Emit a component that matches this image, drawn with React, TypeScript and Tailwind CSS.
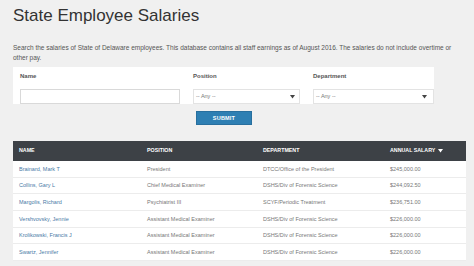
import React from "react";

const rows = [
  ["Brainard, Mark T", "President", "DTCC/Office of the President", "$245,000.00"],
  ["Collins, Gary L", "Chief Medical Examiner", "DSHS/Div of Forensic Science", "$244,092.50"],
  ["Margolis, Richard", "Psychiatrist III", "SCYF/Periodic Treatment", "$236,751.00"],
  ["Vershvovsky, Jennie", "Assistant Medical Examiner", "DSHS/Div of Forensic Science", "$226,000.00"],
  ["Krolikowski, Francis J", "Assistant Medical Examiner", "DSHS/Div of Forensic Science", "$226,000.00"],
  ["Swartz, Jennifer", "Assistant Medical Examiner", "DSHS/Div of Forensic Science", "$226,000.00"],
];

function Caret() {
  return (
    <svg width="5" height="4" viewBox="0 0 10 8" className="inline-block">
      <path d="M0 0 L10 0 L5 7 Z" fill="currentColor" />
    </svg>
  );
}

export default function App() {
  return (
    <div
      className="w-[474px] h-[266px] overflow-hidden bg-[#f0f0f0] text-[#333]"
      style={{ fontFamily: '"Liberation Sans", Arial, sans-serif' }}
    >
      <div className="pl-[13px] pr-[8px]">
        <h1 className="pt-[6px] text-[17px] leading-[20px] text-[#333]">State Employee Salaries</h1>
        <p className="mt-[17px] text-[6.5px] leading-[10px] text-[#555] w-[448px]">
          Search the salaries of State of Delaware employees. This database contains all staff earnings as of August 2016. The salaries do not include overtime or other pay.
        </p>

        <div className="mt-[4px] w-[421px] bg-white pl-[7px] pt-[5px] flex gap-[13px]">
          <div className="w-[160px] flex flex-col">
            <div className="text-[6px] leading-[8px] font-bold text-[#555]">Name</div>
            <div className="mt-[9px] h-[15px] border border-[#d9d9d9] bg-white"></div>
          </div>
          <div className="w-[107px] flex flex-col">
            <div className="text-[6px] leading-[8px] font-bold text-[#555]">Position</div>
            <div className="mt-[9px] h-[15px] border border-[#e3e3e3] bg-white flex items-center justify-between pl-[2px] pr-[4px] text-[5.5px] text-[#777]">
              <span>-- Any --</span>
              <span className="text-[#444]"><Caret /></span>
            </div>
          </div>
          <div className="w-[121px] flex flex-col">
            <div className="text-[6px] leading-[8px] font-bold text-[#555]">Department</div>
            <div className="mt-[9px] h-[15px] border border-[#e3e3e3] bg-white flex items-center justify-between pl-[2px] pr-[6px] text-[5.5px] text-[#777]">
              <span>-- Any --</span>
              <span className="text-[#444]"><Caret /></span>
            </div>
          </div>
        </div>

        <div className="mt-[7px] ml-[183px] w-[56px] h-[14px] bg-[#2e7fb3] border border-[#286f9e] flex items-center justify-center text-white text-[5.5px] font-bold tracking-[0.2px]">
          SUBMIT
        </div>

        <div className="mt-[16px] w-[453px] bg-white">
          <div className="h-[20px] bg-[#3d4146] flex items-center text-white text-[5.3px] font-bold">
            <div className="w-[134px] pl-[6px]">NAME</div>
            <div className="w-[116px]">POSITION</div>
            <div className="w-[127px]">DEPARTMENT</div>
            <div className="flex items-center gap-[3px]">ANNUAL SALARY <Caret /></div>
          </div>
          {rows.map((r, i) => (
            <div key={i} className="h-[16.7px] flex items-center border-b border-[#ececec] text-[5.5px]">
              <div className="w-[134px] pl-[6px] text-[#4a7aa6]">{r[0]}</div>
              <div className="w-[116px] text-[#777]">{r[1]}</div>
              <div className="w-[127px] text-[#777]">{r[2]}</div>
              <div className="text-[#777]">{r[3]}</div>
            </div>
          ))}
        </div>
      </div>
    </div>
  );
}
